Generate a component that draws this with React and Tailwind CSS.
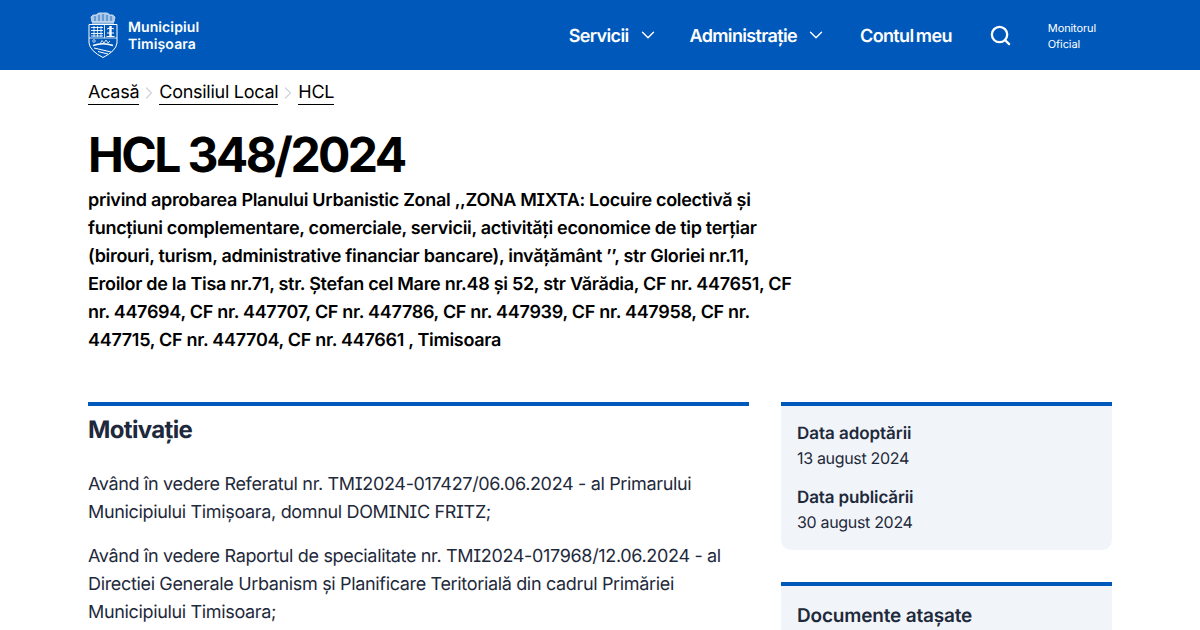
import React from 'react';
import { ChevronDown, ChevronRight, Search } from 'lucide-react';

function Crest() {
  return (
    <svg width="30" height="46" viewBox="0 0 30 46" fill="none" stroke="#fff" strokeWidth="1">
      {/* crown */}
      <path d="M4 10 L3 5 Q5 2 8 3 Q10 0 15 1 Q20 0 22 3 Q25 2 27 5 L26 10 Z" fill="#a9c6e6" stroke="#e4eef8" strokeWidth="0.7" />
      <path d="M7 4 V9 M11 3 V9 M15 2 V9 M19 3 V9 M23 4 V9" stroke="#0059ba" strokeWidth="0.8" />
      <path d="M4 11 H26" strokeWidth="1" />
      {/* shield */}
      <path d="M1 12.5 H29 V31 Q28 39 15 45.5 Q2 39 1 31 Z" strokeWidth="1" />
      <path d="M16.5 12.5 V26 M1 26 H29" strokeWidth="0.8" />
      {/* left quarter: wall */}
      <path d="M3 15.5 H15 M3 18.5 H15 M3 21.5 H15 M3 24 H15" strokeWidth="0.9" />
      <path d="M6 14 V25 M9.5 14 V25 M13 14 V25" strokeWidth="0.8" />
      {/* right quarter: tower */}
      <path d="M22.5 14 V25" strokeWidth="2.4" />
      <path d="M19 17 Q22.5 14.5 26 17 M19 21 H26 M18.5 24.5 H26.5" strokeWidth="1" />
      {/* bottom: river and bridge */}
      <circle cx="6" cy="29" r="1.3" strokeWidth="0.7" />
      <path d="M12 32 L14 28.5 L16 31 L18 28 L20 31 L22 29" strokeWidth="0.8" />
      <path d="M5 33.5 Q15 30 25 33.5" strokeWidth="1.4" />
      <path d="M6 36 L23 40 M10 39.5 L20 42" strokeWidth="1" />
    </svg>
  );
}

function NavLink({ children, chevron }) {
  return (
    <a className="flex items-center gap-[8px] text-[18px] leading-7 font-semibold tracking-[-0.65px] [word-spacing:-1.5px] text-white">
      <span className="pt-[4px]">{children}</span>
      {chevron && <ChevronDown size={22} strokeWidth={1.5} />}
    </a>
  );
}

function Crumb({ children }) {
  return <a className="border-b border-black text-[18px] leading-[22px] tracking-[-0.27px] text-black">{children}</a>;
}

export default function App() {
  return (
    <div className="h-[630px] overflow-hidden bg-white font-['Inter',sans-serif] [font-feature-settings:'cv08'] [text-rendering:geometricPrecision]">
      <header className="flex h-[70px] items-center bg-[#0059ba] pl-[88px] pr-[104px]">
        <div className="flex items-center gap-[10px]">
          <Crest />
          <div className="pt-[2px] text-[14px] leading-[17px] font-semibold tracking-[0.1px] text-white">
            <div>Municipiul</div>
            <div>Timișoara</div>
          </div>
        </div>
        <nav className="ml-auto flex items-center">
          <NavLink chevron>Servicii</NavLink>
          <div className="ml-[31px]">
            <NavLink chevron>Administrație</NavLink>
          </div>
          <div className="ml-[33px]">
            <NavLink>Contul meu</NavLink>
          </div>
          <Search size={23} strokeWidth={2.4} className="ml-[37px] text-white" />
          <div className="ml-[36px] pt-[2px] text-[11px] leading-[16px] tracking-[-0.1px] text-white">
            <div>Monitorul</div>
            <div>Oficial</div>
          </div>
        </nav>
      </header>

      <main className="px-[88px]">
        <div className="flex h-[44px] items-center pt-[2px]">
          <Crumb>Acasă</Crumb>
          <ChevronRight size={20} strokeWidth={1.5} className="text-gray-300" />
          <Crumb>Consiliul Local</Crumb>
          <ChevronRight size={20} strokeWidth={1.5} className="text-gray-300" />
          <Crumb>HCL</Crumb>
        </div>

        <h1 className="mt-[13px] text-[48px] leading-[56px] font-bold tracking-[-2.6px] text-black">HCL 348/2024</h1>
        <p className="mt-[4px] w-[712px] text-[18px] leading-7 font-semibold tracking-[-0.3px] text-black">
          privind aprobarea Planului Urbanistic Zonal ,,ZONA MIXTA: Locuire colectivă și funcțiuni complementare, comerciale, servicii, activități economice de tip terțiar (birouri, turism, administrative financiar bancare), invățământ ’’, str Gloriei nr.11, Eroilor de la Tisa nr.71, str. Ștefan cel Mare nr.48 și 52, str Vărădia, CF nr. 447651, CF nr. 447694, CF nr. 447707, CF nr. 447786, CF nr. 447939, CF nr. 447958, CF nr. 447715, CF nr. 447704, CF nr. 447661 , Timisoara
        </p>

        <div className="mt-[47px] grid grid-cols-[661px_331px] gap-[32px]">
          <section>
            <h2 className="border-t-4 border-[#0059ba] pt-[8px] text-[24px] leading-8 font-bold tracking-[-0.65px] text-[#1e293b]">Motivație</h2>
            <div className="mt-[25px] text-[18px] leading-7 tracking-[-0.34px] text-[#1e293b]">
              <p>Având în vedere Referatul nr. TMI2024-017427/06.06.2024 - al Primarului Municipiului Timișoara, domnul DOMINIC FRITZ;</p>
              <p className="mt-[16px]">Având în vedere Raportul de specialitate nr. TMI2024-017968/12.06.2024 - al Directiei Generale Urbanism și Planificare Teritorială din cadrul Primăriei Municipiului Timisoara;</p>
            </div>
          </section>

          <aside className="flex flex-col gap-[32px]">
            <div className="rounded-b-[10px] border-t-4 border-[#0059ba] bg-[#f1f5f9] p-[16px] text-[#1e293b]">
              <div className="pt-[1px] text-[17px] leading-[23px] font-semibold tracking-[-0.05px]">Data adoptării</div>
              <div className="text-[16px] leading-6 tracking-[-0.32px]">13 august 2024</div>
              <div className="mt-[16px] pt-[1px] text-[17px] leading-[23px] font-semibold tracking-[-0.13px]">Data publicării</div>
              <div className="text-[16px] leading-6 tracking-[-0.32px]">30 august 2024</div>
            </div>
            <div className="rounded-b-[10px] border-t-4 border-[#0059ba] bg-[#f1f5f9] p-[16px] text-[#1e293b]">
              <div className="text-[19px] leading-7 font-semibold tracking-[-0.18px]">Documente atașate</div>
            </div>
          </aside>
        </div>
      </main>
    </div>
  );
}
